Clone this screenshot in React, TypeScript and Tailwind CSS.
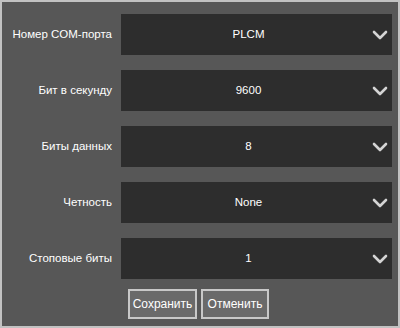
const rows = [
  { label: 'Номер COM-порта', value: 'PLCM' },
  { label: 'Бит в секунду', value: '9600' },
  { label: 'Биты данных', value: '8' },
  { label: 'Четность', value: 'None' },
  { label: 'Стоповые биты', value: '1' },
];

const Chevron = () => (
  <svg width="16" height="10" viewBox="0 0 16 10" fill="none" className="shrink-0">
    <path d="M2 2l6 6 6-6" stroke="#d4d4d4" strokeWidth="2.6" strokeLinecap="round" strokeLinejoin="round" />
  </svg>
);

export default function App() {
  return (
    <div
      className="w-[400px] h-[328px] border-2 border-[#c2c2c2] bg-[#575757] text-white text-[11.5px] pt-[12px]"
      style={{ fontFamily: '"Liberation Sans", Arial, sans-serif' }}
    >
      <div className="flex flex-col gap-[15px]">
        {rows.map((r) => (
          <div key={r.label} className="flex items-center h-[41px]">
            <div className="w-[119px] pr-[9px] text-right">{r.label}</div>
            <div className="w-[271px] h-full bg-[#2d2d2d] flex items-center pr-[4px]">
              <div className="flex-1 text-center pl-[4px]">{r.value}</div>
              <Chevron />
            </div>
          </div>
        ))}
      </div>
      <div className="flex gap-[4px] pl-[126px] mt-[10px]">
        <button className="w-[69px] h-[30px] border-2 border-[#c8c8c8] bg-[#6a6a6a] text-white text-[12px]">
          Сохранить
        </button>
        <button className="w-[68px] h-[30px] border-2 border-[#c8c8c8] bg-[#6a6a6a] text-white text-[12px]">
          Отменить
        </button>
      </div>
    </div>
  );
}
